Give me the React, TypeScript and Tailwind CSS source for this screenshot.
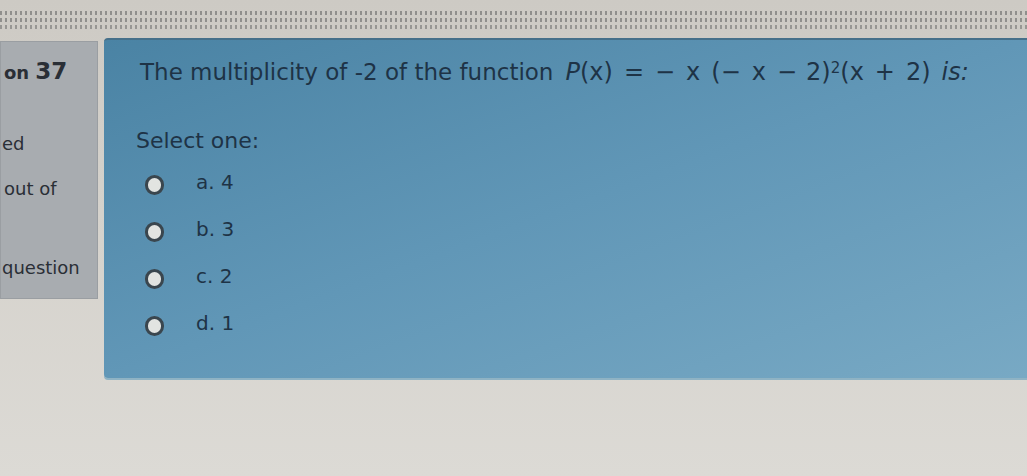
import React from "react";

const font = { fontFamily: '"DejaVu Sans", Verdana, sans-serif' };

function Radio() {
  return <span className="inline-block h-[20px] w-[19px] shrink-0 rounded-full border-[3px] border-[#3a464e] bg-[#e2e4e1]" />;
}

const dots = "h-[4px] w-full bg-[repeating-linear-gradient(90deg,#80807e_0px,#80807e_2px,transparent_2px,transparent_5px)]";

export default function App() {
  const opts = ["a. 4", "b. 3", "c. 2", "d. 1"];
  return (
    <div
      className="relative h-[476px] w-[1027px] overflow-hidden bg-gradient-to-b from-[#cdcac4] via-[#d6d3cd] to-[#dcdad5] text-[#1e3346]"
      style={font}
    >
      <div className="flex h-[38px] flex-col justify-start gap-[3px] pt-[11px]">
        <div className={dots + " opacity-80"} />
        <div className={dots + " opacity-80"} />
        <div className={dots + " opacity-70"} />
      </div>
      <div className="flex items-start gap-[6px]">
        <div className="mt-[3px] flex h-[258px] w-[98px] flex-col border border-[#9a9ea2] bg-[#a8acb0] text-[#2a2f36]">
          <div className="mt-[12px] flex items-baseline gap-[6px] pl-[3px]">
            <span className="text-[18px] font-bold">on</span>
            <span className="text-[23px] font-bold">37</span>
          </div>
          <div className="mt-[46px] pl-[1px] text-[18px] leading-none">ed</div>
          <div className="mt-[27px] pl-[3px] text-[18px] leading-none">out of</div>
          <div className="mt-[61px] pl-[1px] text-[18px] leading-none">question</div>
        </div>
        <div className="h-[340px] flex-1 rounded-l-[4px] border-t-2 border-[#46708a] bg-gradient-to-br from-[#4a83a4] via-[#6197b7] to-[#78a9c4] pl-[36px] pt-[20px] shadow-[0_2px_0_#8fb3c4]">
          <div className="flex items-baseline text-[23px] leading-none">
            <span>The multiplicity of -2 of the function</span>
            <span className="ml-[12px] flex items-baseline gap-[11px] text-[24px]">
              <span><i>P</i>(x)</span>
              <span>=</span>
              <span>−</span>
              <span>x</span>
              <span>(−</span>
              <span>x</span>
              <span>−</span>
              <span className="-ml-[2px]">2)<sup className="text-[15px]">2</sup>(x</span>
              <span>+</span>
              <span>2)</span>
              <i>is:</i>
            </span>
          </div>
          <div className="mt-[46px] -ml-[4px] text-[22px] leading-none">Select one:</div>
          <div className="mt-[23px] flex flex-col gap-[27px] pl-[5px]">
            {opts.map((o) => (
              <div key={o} className="flex items-center gap-[32px]">
                <Radio />
                <span className="-mt-[6px] text-[20px] leading-none">{o}</span>
              </div>
            ))}
          </div>
        </div>
      </div>
    </div>
  );
}
